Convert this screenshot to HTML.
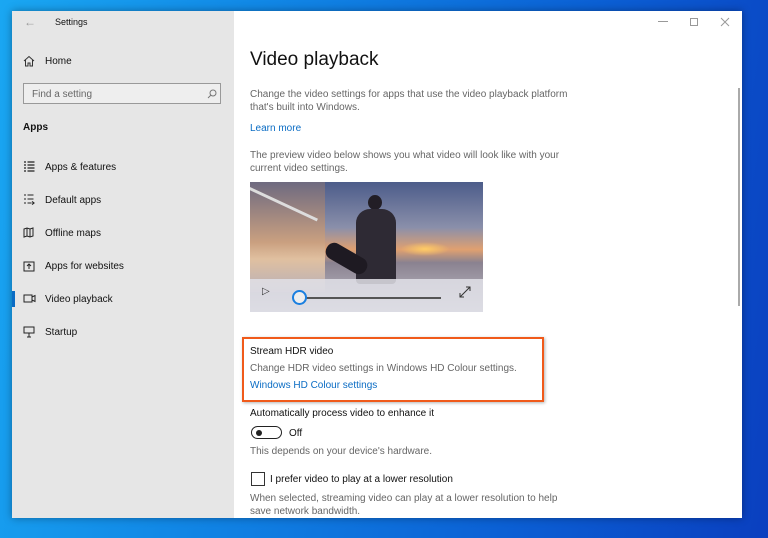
<!DOCTYPE html>
<html><head><meta charset="utf-8"><style>
*{margin:0;padding:0;box-sizing:border-box}
body{width:768px;height:538px;overflow:hidden;font-family:"Liberation Sans",sans-serif;background:linear-gradient(100deg,#1aa7f2 0%,#1188e6 30%,#0b5fd4 70%,#0a3fbf 100%);position:relative}
.win{position:absolute;left:12px;top:11px;width:730px;height:507px;background:#fff;box-shadow:0 0 8px rgba(0,0,0,.35)}
.side{position:absolute;left:0;top:0;width:222px;height:507px;background:#e6e6e6}
.t{position:absolute;white-space:nowrap;color:#111}
.s{font-size:10px}
.g{color:#666}
.l{color:#0a6cc4}
.ico{position:absolute}
</style></head><body>
<div class="win">
<div class="side">
 <div class="t" style="left:12px;top:4px;color:#999;font-size:12px">←</div>
 <div class="t" style="left:43px;top:6px;font-size:9px">Settings</div>
 <svg class="ico" style="left:11px;top:44px" width="12" height="12" viewBox="0 0 12 12"><path d="M1 6 L6 1.5 L11 6 M2.5 5 V11 H5 V8 H7 V11 H9.5 V5" fill="none" stroke="#333" stroke-width="1"/></svg>
 <div class="t s" style="left:33px;top:45px">Home</div>
 <div style="position:absolute;left:11px;top:72px;width:198px;height:21px;border:1.5px solid #999;background:#eee"></div>
 <div class="t s" style="left:20px;top:78px;color:#666">Find a setting</div>
 <svg class="ico" style="left:195px;top:78px" width="10" height="10" viewBox="0 0 10 10"><circle cx="6" cy="4" r="3" fill="none" stroke="#777"/><path d="M4 6 L1 9" stroke="#777"/></svg>
 <div class="t" style="left:11px;top:111px;font-size:10px;font-weight:bold">Apps</div>
 <svg class="ico" style="left:11px;top:150px" width="12" height="11" viewBox="0 0 12 11"><path d="M1 1h2M1 4h2M1 7h2M1 10h2M4.5 1h7M4.5 4h7M4.5 7h7M4.5 10h7" stroke="#222" stroke-width="1.2"/></svg>
 <div class="t s" style="left:33px;top:151px">Apps &amp; features</div>
 <svg class="ico" style="left:11px;top:183px" width="12" height="11" viewBox="0 0 12 11"><path d="M1 1h2M1 5h2M1 9h2M4.5 1h6M4.5 5h6M4.5 9h4M9 7.5l2 1.5-2 1.5" stroke="#222" stroke-width="1.1" fill="none"/></svg>
 <div class="t s" style="left:33px;top:184px">Default apps</div>
 <svg class="ico" style="left:11px;top:216px" width="12" height="12" viewBox="0 0 12 12"><path d="M1 2v8l3-1 3 1 3-1V1L7 2 4 1z M4 1v8M7 2v8" stroke="#222" fill="none"/></svg>
 <div class="t s" style="left:33px;top:217px">Offline maps</div>
 <svg class="ico" style="left:11px;top:250px" width="12" height="11" viewBox="0 0 12 11"><rect x="1" y="1" width="10" height="9" fill="none" stroke="#222"/><path d="M6 3v5M4 5l2-2 2 2" stroke="#222" fill="none"/></svg>
 <div class="t s" style="left:33px;top:250px">Apps for websites</div>
 <div style="position:absolute;left:0;top:280px;width:3px;height:16px;background:#0a6cc4"></div>
 <svg class="ico" style="left:11px;top:283px" width="13" height="9" viewBox="0 0 13 9"><rect x="1" y="1" width="8" height="7" fill="none" stroke="#222"/><path d="M9 3l3-1.5v6L9 6" stroke="#222" fill="none"/></svg>
 <div class="t s" style="left:33px;top:283px">Video playback</div>
 <svg class="ico" style="left:11px;top:315px" width="12" height="12" viewBox="0 0 12 12"><rect x="1" y="1" width="10" height="6" fill="none" stroke="#222"/><path d="M6 7v4M4 11h4" stroke="#222"/></svg>
 <div class="t s" style="left:33px;top:316px">Startup</div>
</div>
<div style="position:absolute;left:646px;top:10px;width:10px;height:1px;background:#999"></div>
<div style="position:absolute;left:678px;top:7px;width:8px;height:8px;border:1px solid #999"></div>
<svg class="ico" style="left:708px;top:6px" width="10" height="10" viewBox="0 0 10 10"><path d="M1 1L9 9M9 1L1 9" stroke="#999"/></svg>
<div style="position:absolute;left:726px;top:77px;width:2px;height:218px;background:#aaa"></div>
<div class="t" style="left:238px;top:38px;font-size:19px;color:#111">Video playback</div>
<div class="t s g" style="left:238px;top:77px;line-height:13px">Change the video settings for apps that use the video playback platform<br>that's built into Windows.</div>
<div class="t s l" style="left:238px;top:112px">Learn more</div>
<div class="t s g" style="left:238px;top:138px;line-height:13px">The preview video below shows you what video will look like with your<br>current video settings.</div>
<div style="position:absolute;left:238px;top:171px;width:233px;height:130px;overflow:hidden;background:linear-gradient(180deg,#4c5c8a 0%,#8a8faa 35%,#e0a070 52%,#8a8290 62%,#c4c3cc 100%)">
 <div style="position:absolute;left:0;top:0;width:75px;height:110px;background:linear-gradient(180deg,#6e6a80,#caa080 55%,#e0c0a0 70%,#b8b0b8)"></div>
 <div style="position:absolute;left:0;top:5px;width:75px;height:3px;background:#ddd;transform:rotate(25deg);transform-origin:0 0"></div>
 <div style="position:absolute;left:118px;top:13px;width:14px;height:15px;border-radius:50%;background:#221e26"></div>
 <div style="position:absolute;left:106px;top:27px;width:40px;height:75px;background:#2e2a34;border-radius:14px 14px 4px 4px"></div>
 <div style="position:absolute;left:74px;top:68px;width:45px;height:17px;background:#1e1a22;border-radius:8px;transform:rotate(30deg)"></div>
 <div style="position:absolute;left:150px;top:60px;width:50px;height:14px;background:radial-gradient(ellipse,#ffcc66,rgba(255,180,80,0) 70%)"></div>
 <div style="position:absolute;left:0;top:97px;width:233px;height:33px;background:rgba(225,225,232,.85)"></div>
 <div class="t" style="left:12px;top:104px;font-size:10px;color:#333">▷</div>
 <div style="position:absolute;left:55px;top:115px;width:136px;height:1.5px;background:#555"></div>
 <div style="position:absolute;left:42px;top:108px;width:15px;height:15px;border-radius:50%;background:#eee;border:2px solid #1a7fe0"></div>
 <svg class="ico" style="left:209px;top:104px" width="12" height="12" viewBox="0 0 12 12"><path d="M1 11L11 1M1 7v4h4M7 1h4v4" stroke="#333" fill="none"/></svg>
</div>
<div style="position:absolute;left:230px;top:326px;width:302px;height:65px;border:2px solid #f05a1a;box-shadow:1px 1px 3px rgba(0,0,0,.3)"></div>
<div class="t s" style="left:238px;top:335px">Stream HDR video</div>
<div class="t s g" style="left:238px;top:352px">Change HDR video settings in Windows HD Colour settings.</div>
<div class="t s l" style="left:238px;top:369px">Windows HD Colour settings</div>
<div class="t s" style="left:238px;top:397px">Automatically process video to enhance it</div>
<div style="position:absolute;left:239px;top:415px;width:31px;height:13px;border:1.5px solid #222;border-radius:7px"></div>
<div style="position:absolute;left:244px;top:419px;width:6px;height:6px;border-radius:50%;background:#222"></div>
<div class="t s" style="left:277px;top:417px">Off</div>
<div class="t s g" style="left:238px;top:435px">This depends on your device's hardware.</div>
<div style="position:absolute;left:239px;top:461px;width:14px;height:14px;border:1.5px solid #333"></div>
<div class="t s" style="left:258px;top:463px">I prefer video to play at a lower resolution</div>
<div class="t s g" style="left:238px;top:481px;line-height:13px">When selected, streaming video can play at a lower resolution to help<br>save network bandwidth.</div>
</div>
</body></html>
